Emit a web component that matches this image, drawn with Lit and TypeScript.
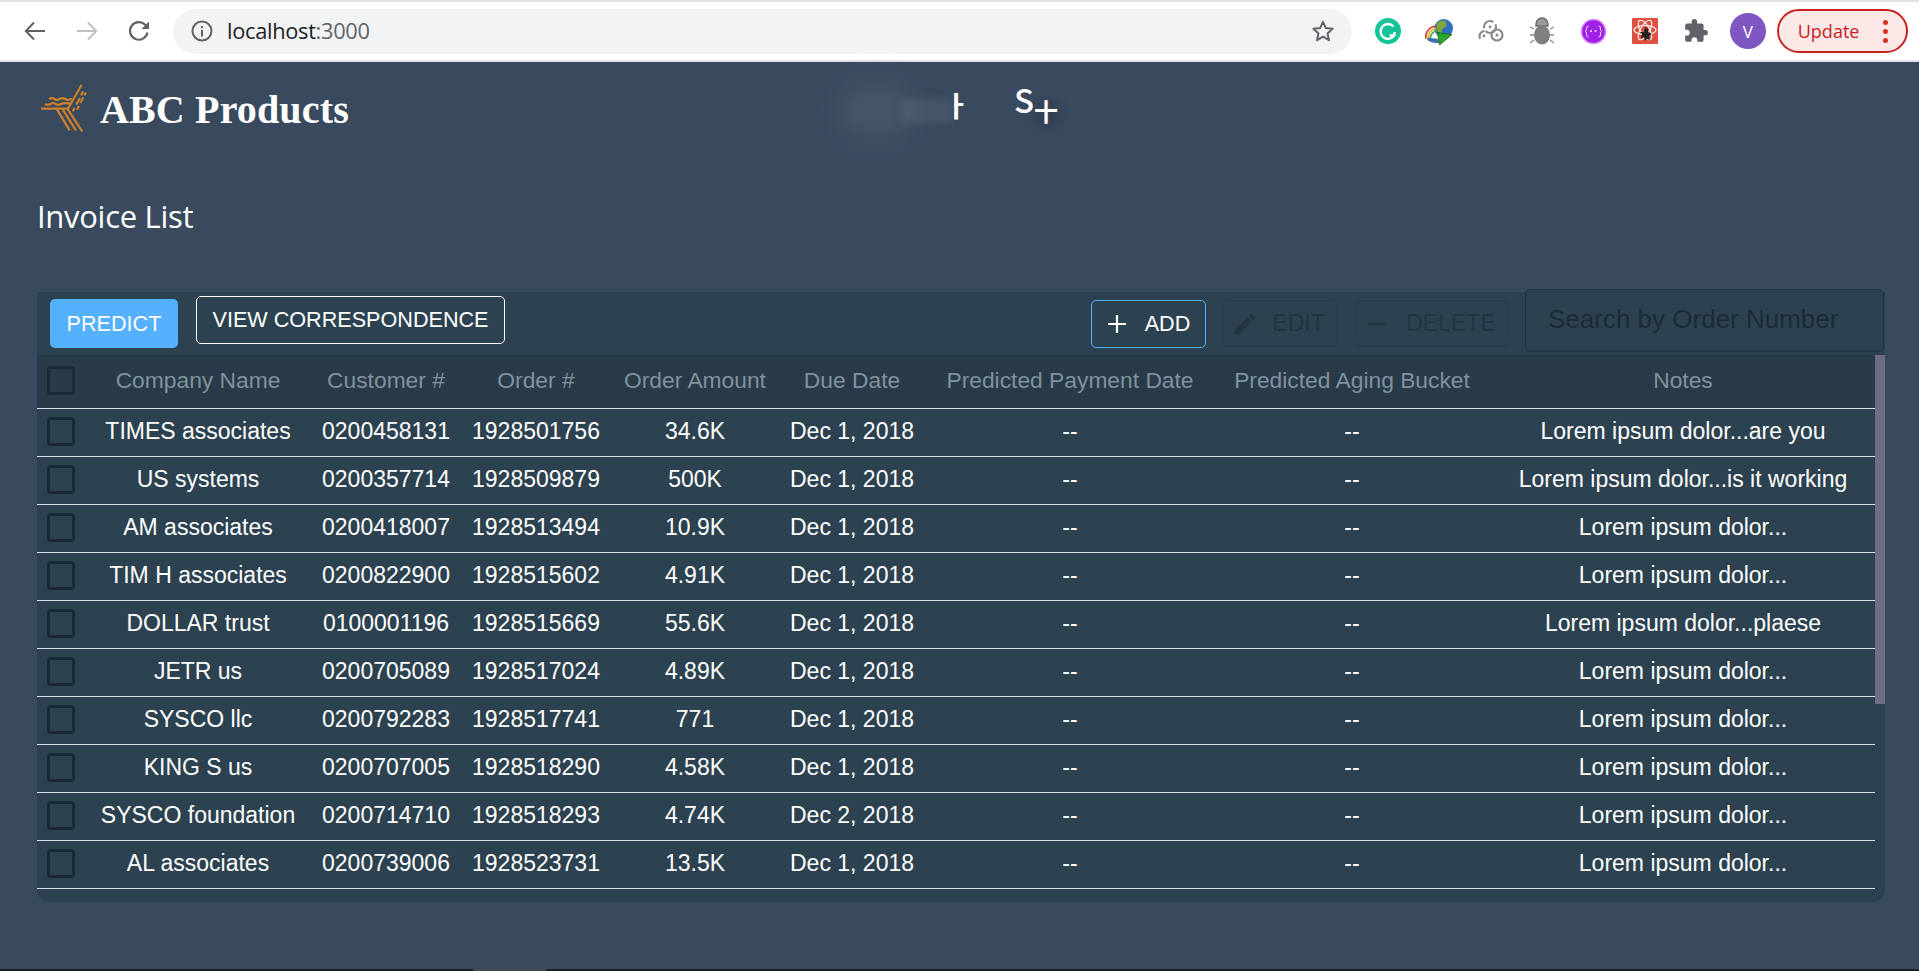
import { LitElement, html, css, svg } from "lit";
import { customElement } from "lit/decorators.js";

const ROWS = [
  ["TIMES associates", "0200458131", "1928501756", "34.6K", "Dec 1, 2018", "Lorem ipsum dolor...are you"],
  ["US systems", "0200357714", "1928509879", "500K", "Dec 1, 2018", "Lorem ipsum dolor...is it working"],
  ["AM associates", "0200418007", "1928513494", "10.9K", "Dec 1, 2018", "Lorem ipsum dolor..."],
  ["TIM H associates", "0200822900", "1928515602", "4.91K", "Dec 1, 2018", "Lorem ipsum dolor..."],
  ["DOLLAR trust", "0100001196", "1928515669", "55.6K", "Dec 1, 2018", "Lorem ipsum dolor...plaese"],
  ["JETR us", "0200705089", "1928517024", "4.89K", "Dec 1, 2018", "Lorem ipsum dolor..."],
  ["SYSCO llc", "0200792283", "1928517741", "771", "Dec 1, 2018", "Lorem ipsum dolor..."],
  ["KING S us", "0200707005", "1928518290", "4.58K", "Dec 1, 2018", "Lorem ipsum dolor..."],
  ["SYSCO foundation", "0200714710", "1928518293", "4.74K", "Dec 2, 2018", "Lorem ipsum dolor..."],
  ["AL associates", "0200739006", "1928523731", "13.5K", "Dec 1, 2018", "Lorem ipsum dolor..."],
];
const HEADERS = ["Company Name", "Customer #", "Order #", "Order Amount", "Due Date", "Predicted Payment Date", "Predicted Aging Bucket", "Notes"];
const WIDTHS = [46, 230, 146, 154, 164, 150, 286, 278, 384];

const logo = svg`<svg class="logo" width="46" height="48" viewBox="33 26 138 144" fill="none" stroke="#cf8029" stroke-width="6.5">
  <path d="M33 100 H114 L155 28"/>
  <path d="M57 71 q8 -5 16 0 t16 0 t16 0 t20 -1"/>
  <path d="M45 86 q8 5 16 0 t16 0 t16 0 t29 -1"/>
  <path d="M128 108 L134 97 M139 88 L150 68 M153 60 L160 48"/>
  <path d="M141 103 L147 92 M151 83 L160 66 M163 60 L168 52"/>
  <path d="M81 102 L119 165 M98 102 L138 166 M112 100 L157 169"/>
</svg>`;

@customElement("app-root")
export class AppRoot extends LitElement {
  static styles = css`
    :host { display: block; width: 1919px; height: 971px; overflow: hidden; background: #39495e; font-family: "Liberation Sans", Arial, sans-serif; position: relative; }
    .chrome { height: 62px; box-sizing: border-box; background: #fff; border-top: 2px solid #dee1e6; border-bottom: 2px solid #dee1e6; display: flex; align-items: center; position: relative; }
    .nav { width: 52px; display: flex; justify-content: center; flex: none; }
    .navs { display: flex; margin-left: 9px; width: 164px; flex: none; }
    .omni { width: 1179px; height: 45px; border-radius: 23px; background: #f1f3f4; display: flex; align-items: center; flex: none; box-sizing: border-box; padding: 0 17px 0 18px; }
    .url { margin-left: 14px; font: 21.8px "Open Sans", sans-serif; color: #202124; flex: 1; letter-spacing: -0.3px; padding-bottom: 1px; }
    .url span { color: #5f6368; }
    .ext { display: flex; align-items: center; margin-left: 10px; }
    .ext > div { width: 51.4px; display: flex; justify-content: center; align-items: center; flex: none; }
    .avatar { width: 36px; height: 36px; border-radius: 50%; background: #7e57c2; color: #fff; font: 17px "Open Sans", sans-serif; display: flex; align-items: center; justify-content: center; margin-left: 8px; flex: none; }
    .update { margin-left: 11px; width: 131px; height: 44px; box-sizing: border-box; border: 2px solid #c5221f; border-radius: 22px; background: #fce8e6; color: #c5221f; display: flex; align-items: center; font: 18px "Open Sans", sans-serif; padding-left: 19px; gap: 24px; flex: none; }
    .dots { display: flex; flex-direction: column; gap: 4px; }
    .dots i { display: block; width: 5px; height: 5px; border-radius: 50%; background: #d93025; }

    .brand { height: 94px; display: flex; align-items: center; padding-left: 41px; position: relative; box-sizing: border-box; }
    .logo { flex: none; margin-bottom: 2px; }
    .brand h1 { margin: 0 0 0 13px; font: bold 40px "Liberation Serif", "Times New Roman", serif; color: #fff; letter-spacing: 0.15px; }
    .smudge { position: absolute; border-radius: 50%; filter: blur(14px); background: rgba(120, 132, 146, 0.22); }
    .sm1 { left: 836px; top: 18px; width: 80px; height: 62px; }
    .sm2 { left: 902px; top: 36px; width: 50px; height: 26px; border-radius: 0; filter: blur(3px); background: rgba(120, 132, 146, 0.2); }
    .sm3 { left: 1035px; top: 40px; width: 24px; height: 24px; filter: blur(6px); background: rgba(40, 52, 70, 0.5); }
    .glyphs { position: absolute; color: #fff; font-family: "Noto Sans CJK KR", "Noto Sans", sans-serif; line-height: 1; font-weight: 700; }
    .g1 { left: 944px; top: 29px; font-size: 28px; }
    .g2 { left: 1014px; top: 21px; font-size: 33px; font-weight: 500; }
    .g3 { left: 1034px; top: 37px; font-size: 24px; }

    h2 { margin: 0; padding: 39px 0 0 37px; height: 136px; box-sizing: border-box; font: 400 31px "Open Sans", sans-serif; color: #fff; letter-spacing: -0.3px; }

    .panel { margin: 0 34px 0 37px; height: 610px; background: #2d4250; border-radius: 0 0 12px 12px; position: relative; }
    .toolbar { height: 63px; display: flex; align-items: flex-start; box-sizing: border-box; }
    .btn { box-sizing: border-box; border-radius: 5px; display: flex; align-items: center; justify-content: center; font-size: 21.6px; flex: none; }
    .predict { margin: 7px 0 0 13px; width: 128px; height: 49px; background: #55b0fe; color: #fff; }
    .view { margin: 4px 0 0 18px; width: 309px; height: 48px; border: 1px solid #fff; color: #fff; }
    .add { margin: 8px 0 0 586px; width: 115px; height: 48px; border: 1px solid #4fb0ff; color: #fff; gap: 18px; }
    .edit { margin: 8px 0 0 16px; width: 116px; height: 47px; border: 1px solid #283b48; color: #233541; gap: 13px; font-size: 23px; padding-right: 4px; }
    .del { margin: 8px 0 0 17px; width: 154px; height: 47px; border: 1px solid #283b48; color: #233541; gap: 20px; font-size: 23px; }
    .search { margin: -3px 0 0 16px; width: 359px; height: 63px; box-sizing: border-box; border: 1px solid #22333f; border-radius: 5px; background: #2d4250; color: #1c2b37; font-size: 26px; display: flex; align-items: center; padding-left: 22px; padding-bottom: 2px; flex: none; position: relative; }
    .scrollbar { position: absolute; right: 0; top: 63px; width: 10px; height: 349px; background: #6c6c85; }
    table { width: 1838px; border-collapse: separate; border-spacing: 0; table-layout: fixed; }
    th { height: 54px; box-sizing: border-box; padding: 0 0 2px; font-weight: 400; font-size: 22.8px; color: #7f929d; background: #293b49; border-bottom: 1px solid #d9dedf; text-align: center; }
    td { height: 48px; box-sizing: border-box; padding: 0 0 2px; font-size: 23px; color: #fff; border-bottom: 1px solid #d9dedf; text-align: center; }
    .box { display: block; width: 28px; height: 29px; margin: 0 0 0 10px; box-sizing: border-box; border: 3.5px solid #1a2a36; border-radius: 4px; }
    .bar { position: absolute; left: 0; right: 0; bottom: 0; height: 2px; background: #1d1f22; }
    .bar i { position: absolute; left: 473px; width: 73px; top: 0; bottom: 0; background: #4a4a4a; }
  `;

  private extIcons() {
    return [
      html`<svg width="30" height="30" viewBox="0 0 30 30"><circle cx="15" cy="15" r="13" fill="#15c39a"/><path d="M20.5 10.5 A7.4 7.4 0 1 0 21.5 19 V16" fill="none" stroke="#fff" stroke-width="2.4"/><path d="M21 19.5 H16.5" stroke="#fff" stroke-width="2.4"/></svg>`,
      html`<svg width="28" height="27" viewBox="0 0 27 26"><circle cx="18" cy="10" r="9" fill="#2d6fc0"/><path d="M11 5 q5 -4 9 -2 l1 5 -4 2 -1 5 -4 -2z" fill="#7fa53c"/><g fill="none" stroke-width="1.6"><path d="M1 20 A10 10 0 0 1 10 8" stroke="#d8452f"/><path d="M3 20 A9 9 0 0 1 11 10" stroke="#e8b22e"/><path d="M5 20 A8 8 0 0 1 12 12" stroke="#4ba93c"/></g><path d="M2 21 q5 4 12 3 l-2 -4 -9 -1z" fill="#3c6fb0"/><path d="M12 14 L26 16 L14 26 Z" fill="#2ba52e" stroke="#176b1c" stroke-width="0.8"/></svg>`,
      html`<svg width="28" height="26" viewBox="0 0 28 26" fill="none" stroke="#8a8a8a" stroke-width="2.2"><circle cx="14" cy="9" r="6" stroke-dasharray="14 3"/><path d="M4 21 a5.5 5.5 0 0 1 4.5 -8"/><circle cx="21" cy="17" r="5.5"/><circle cx="14" cy="9" r="1.4" fill="#8a8a8a" stroke="none"/><circle cx="21" cy="17" r="1.6" fill="#8a8a8a" stroke="none"/><circle cx="8" cy="18" r="1.4" fill="#8a8a8a" stroke="none"/></svg>`,
      html`<svg width="24" height="30" viewBox="0 0 24 30"><path d="M6 8 a6 6 0 0 1 12 0 v2 h-12z" fill="#9a9a9a" stroke="#6a6a6a" stroke-width="1.4"/><ellipse cx="12" cy="19" rx="8" ry="9.5" fill="#7f7f7f"/><path d="M4 13 L0 11 M4 19 H0 M4 24 L0 27 M20 13 L24 11 M20 19 H24 M20 24 L24 27" stroke="#8c8c8c" stroke-width="1.3"/></svg>`,
      html`<svg width="27" height="27" viewBox="0 0 27 27"><circle cx="13.5" cy="13.5" r="12" fill="#a020e8"/><circle cx="13.5" cy="13.5" r="12" fill="none" stroke="#d58cf5" stroke-width="1.5"/><path d="M8.5 8 q-2 0 -2 2 v2 l-1 1.5 1 1.5 v2 q0 2 2 2 M18.5 8 q2 0 2 2 v2 l1 1.5 -1 1.5 v2 q0 2 -2 2" fill="none" stroke="#efd4ff" stroke-width="1"/><circle cx="11" cy="13" r="1.1" fill="#f3d9ff"/><circle cx="15.5" cy="13" r="1.1" fill="#f3d9ff"/></svg>`,
      html`<svg width="26" height="26" viewBox="0 0 26 26"><rect width="26" height="26" rx="1" fill="#e04f3f"/><g fill="none" stroke="#fff" stroke-width="1.1"><ellipse cx="13" cy="12" rx="11" ry="4.5"/><ellipse cx="13" cy="12" rx="11" ry="4.5" transform="rotate(60 13 12)"/><ellipse cx="13" cy="12" rx="11" ry="4.5" transform="rotate(120 13 12)"/></g><path d="M13 9 l3 2 0 3 4 2 -3 2 1 4 -3 -1 -2 2 -1 -4 -3 1 1 -4 -2 -2 4 0z" fill="#222"/></svg>`,
      html`<svg width="26" height="26" viewBox="0 0 24 24"><path fill="#5f6368" d="M20.5 11H19V7a2 2 0 0 0-2-2h-4V3.5a2.5 2.5 0 0 0-5 0V5H4a2 2 0 0 0-2 2v3.8h1.5a2.7 2.7 0 0 1 0 5.4H2V20a2 2 0 0 0 2 2h3.8v-1.5a2.7 2.7 0 0 1 5.4 0V22H17a2 2 0 0 0 2-2v-4h1.5a2.5 2.5 0 0 0 0-5z"/></svg>`,
    ];
  }

  render() {
    return html`
      <div class="chrome">
        <div class="navs">
          <div class="nav"><svg width="24" height="24" viewBox="0 0 24 24" fill="none" stroke="#5f6368" stroke-width="2"><path d="M22 12H3M11 3.5 2.8 12l8.2 8.5"/></svg></div>
          <div class="nav"><svg width="24" height="24" viewBox="0 0 24 24" fill="none" stroke="#bdc1c6" stroke-width="2"><path d="M2 12h19M13 3.5l8.2 8.5-8.2 8.5"/></svg></div>
          <div class="nav"><svg width="24" height="24" viewBox="0 0 24 24" fill="none" stroke="#5f6368" stroke-width="2.2"><path d="M20.5 13.5A8.8 8.8 0 1 1 18.2 5.8L21 8.5"/><path d="M22 2.5V10h-7.5z" fill="#5f6368" stroke="none"/></svg></div>
        </div>
        <div class="omni">
          <svg width="22" height="22" viewBox="0 0 22 22" fill="none"><circle cx="11" cy="11" r="9.5" stroke="#5f6368" stroke-width="2"/><rect x="10" y="10" width="2" height="6.5" fill="#5f6368"/><rect x="10" y="6" width="2" height="2.2" fill="#5f6368"/></svg>
          <div class="url">localhost<span>:3000</span></div>
          <svg width="24" height="24" viewBox="0 0 24 24" fill="none" stroke="#5f6368" stroke-width="2" stroke-linejoin="round"><path d="M12 2.8l2.8 6.3 6.8.7-5.1 4.6 1.5 6.8-6-3.5-6 3.5 1.5-6.8-5.1-4.6 6.8-.7z"/></svg>
        </div>
        <div class="ext">${this.extIcons().map((i) => html`<div>${i}</div>`)}</div>
        <div class="avatar">V</div>
        <div class="update">Update<span class="dots"><i></i><i></i><i></i></span></div>
      </div>
      <div class="brand">
        ${logo}
        <h1>ABC Products</h1>
        <div class="smudge sm1"></div>
        <div class="smudge sm2"></div>
        <div class="smudge sm3"></div>
        <span class="glyphs g1">ㅏ</span>
        <span class="glyphs g2">S</span>
        <span class="glyphs g3">十</span>
      </div>
      <h2>Invoice List</h2>
      <div class="panel">
        <div class="toolbar">
          <div class="btn predict">PREDICT</div>
          <div class="btn view">VIEW CORRESPONDENCE</div>
          <div class="btn add"><svg width="20" height="20" viewBox="0 0 18 18" stroke="#fff" stroke-width="2"><path d="M9 1v16M1 9h16"/></svg>ADD</div>
          <div class="btn edit"><svg width="28" height="28" viewBox="0 0 24 24" fill="#233541"><path d="M3 17.25V21h3.75L17.81 9.94l-3.75-3.75L3 17.25zM20.71 7.04a1 1 0 0 0 0-1.41l-2.34-2.34a1 1 0 0 0-1.41 0l-1.83 1.83 3.75 3.75 1.83-1.83z"/></svg>EDIT</div>
          <div class="btn del"><svg width="18" height="4" viewBox="0 0 18 4" fill="#233541"><rect width="18" height="2.4" y="0.8"/></svg>DELETE</div>
          <div class="search">Search by Order Number</div>
        </div>
        <table>
          <colgroup>${WIDTHS.map((w) => html`<col style="width:${w}px" />`)}</colgroup>
          <thead>
            <tr><th><span class="box"></span></th>${HEADERS.map((h) => html`<th>${h}</th>`)}</tr>
          </thead>
          <tbody>
            ${ROWS.map((r) => html`<tr>
              <td><span class="box"></span></td>
              <td>${r[0]}</td><td>${r[1]}</td><td>${r[2]}</td><td>${r[3]}</td><td>${r[4]}</td><td>--</td><td>--</td><td>${r[5]}</td>
            </tr>`)}
          </tbody>
        </table>
        <div class="scrollbar"></div>
      </div>
      <div class="bar"><i></i></div>
    `;
  }
}
